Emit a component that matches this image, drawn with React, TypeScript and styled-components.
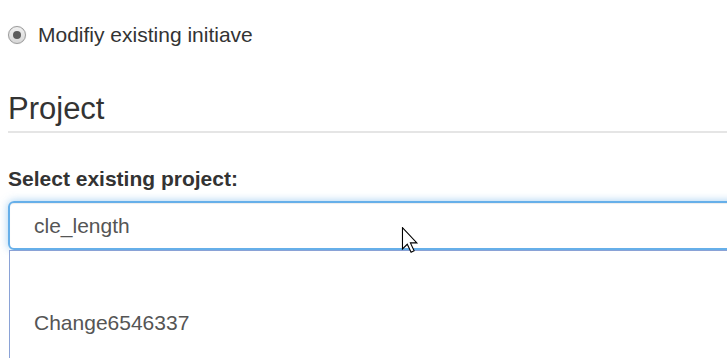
import React, { FC } from 'react';
import styled, { createGlobalStyle } from 'styled-components';

const GlobalStyle = createGlobalStyle`
  html, body {
    margin: 0;
    padding: 0;
    background: #fff;
    overflow: hidden;
  }
  body {
    font-family: "Liberation Sans", Arial, Helvetica, sans-serif;
    color: #333;
  }
`;

const Page = styled.div`
  position: relative;
  width: 727px;
  height: 358px;
  padding: 0 8px;
  box-sizing: border-box;
  overflow: hidden;
`;

const RadioRow = styled.label`
  display: flex;
  align-items: center;
  height: 30px;
  margin-top: 20px;
  font-size: 21px;
  line-height: 30px;
  color: #333;
`;

const RadioDot = styled.span`
  position: relative;
  display: block;
  width: 18px;
  height: 18px;
  margin-left: 0;
  margin-right: 12px;
  border-radius: 50%;
  border: 1px solid #9a9a9a;
  box-sizing: border-box;
  background: linear-gradient(#f0f0f0, #d8d8d8);
  box-shadow: 0 0 1px rgba(0, 0, 0, 0.2);
  flex: 0 0 18px;

  &::after {
    content: '';
    position: absolute;
    left: 4px;
    top: 4px;
    width: 8px;
    height: 8px;
    border-radius: 50%;
    background: #5c5c5c;
  }
`;

const Legend = styled.div`
  width: 760px;
  margin-top: 36px;
  font-size: 31px;
  line-height: 45px;
  color: #333;
  border-bottom: 2px solid #e5e5e5;
`;

const FieldLabel = styled.div`
  margin-top: 31px;
  margin-bottom: 7px;
  font-size: 21px;
  font-weight: bold;
  line-height: 30px;
  color: #333;
`;

const Combo = styled.div`
  width: 860px;
`;

const Input = styled.div`
  height: 49px;
  display: flex;
  align-items: center;
  padding-left: 24px;
  box-sizing: border-box;
  border: 2px solid #66afe9;
  border-radius: 6px;
  box-shadow: inset 0 1px 1px rgba(0, 0, 0, 0.075), 0 0 8px rgba(102, 175, 233, 0.6);
  font-size: 21px;
  line-height: 30px;
  color: #555;
`;

const Menu = styled.ul`
  list-style: none;
  margin: 0 0 0 1px;
  padding: 0;
  min-height: 140px;
  border-top: 1px solid #8aa2d6;
  border-left: 1px solid #8aa2d6;
  background: #fff;
`;

const MenuItem = styled.li`
  padding: 9px 24px;
  min-height: 30px;
  font-size: 21px;
  line-height: 30px;
  color: #555;
`;

const Cursor = styled.svg`
  position: absolute;
  left: 401px;
  top: 227px;
`;

const App: FC = () => {
  return (
    <>
      <GlobalStyle />
      <Page>
        <RadioRow>
          <RadioDot />
          Modifiy existing initiave
        </RadioRow>
        <Legend>Project</Legend>
        <FieldLabel>Select existing project:</FieldLabel>
        <Combo>
          <Input>cle_length</Input>
          <Menu>
            <MenuItem />
            <MenuItem>Change6546337</MenuItem>
          </Menu>
        </Combo>
        <Cursor width="18" height="26" viewBox="0 0 12 19">
          <path
            d="M0.5 0.5 L0.5 16 L4 12.6 L6.8 18.4 L9 17.4 L6.3 11.6 L11 11.6 Z"
            fill="#fff"
            stroke="#000"
            strokeWidth="0.8"
            strokeLinejoin="miter"
          />
        </Cursor>
      </Page>
    </>
  );
};

export default App;
